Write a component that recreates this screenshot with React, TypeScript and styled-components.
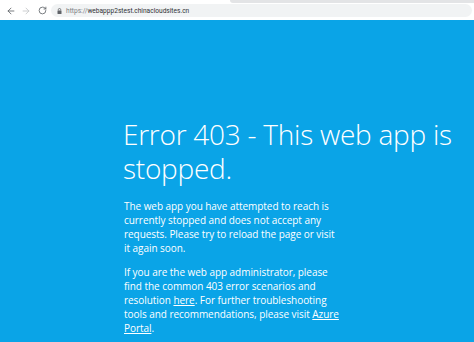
import React from "react";
import styled, { createGlobalStyle } from "styled-components";
import { ArrowLeft, ArrowRight, RotateCw } from "lucide-react";

const Global = createGlobalStyle`
  html, body { margin: 0; padding: 0; }
  body {
    background: #0aa4e7;
    width: 474px;
    height: 342px;
    overflow: hidden;
  }
`;

const Page = styled.div`
  display: flex;
  flex-direction: column;
  width: 474px;
  height: 342px;
  background: #0aa4e7;
`;

const Chrome = styled.header`
  height: 20px;
  background: #ffffff;
  display: flex;
  flex-direction: column;
`;

const TabStrip = styled.div`
  height: 3px;
  display: flex;
`;

const TabSpacer = styled.div`
  width: 230px;
  background: #ffffff;
`;

const TabEdge = styled.div`
  flex: 1;
  background: #e3e4e6;
  border-bottom-left-radius: 3px;
`;

const Toolbar = styled.div`
  flex: 1;
  display: flex;
  align-items: center;
  padding: 1px 2px 3px 4px;
`;

const NavButton = styled.span<{ $dim?: boolean; $w: number }>`
  width: ${(p) => p.$w}px;
  display: flex;
  align-items: center;
  justify-content: center;
  color: ${(p) => (p.$dim ? "#c3c5c8" : "#5f6368")};
`;

const Omnibox = styled.div`
  flex: 1;
  height: 13px;
  margin-left: 1px;
  border-radius: 7px;
  background: #f1f3f4;
  display: flex;
  align-items: center;
  padding-left: 6px;
  gap: 4px;
`;

const Url = styled.span`
  font-family: Roboto, "Liberation Sans", sans-serif;
  font-size: 6.6px;
  color: #303134;
  white-space: nowrap;
`;

const Scheme = styled.span`
  color: #7b7f84;
`;

const Content = styled.main`
  flex: 1;
  padding: 97px 0 0 123px;
  color: #ffffff;
`;

const Title = styled.h1`
  margin: 0;
  font-family: "Open Sans", "Segoe UI", sans-serif;
  font-weight: 300;
  font-size: 28px;
  line-height: 34px;
  letter-spacing: -0.25px;
  white-space: nowrap;
`;

const Para = styled.p`
  margin: 14px 0 0 1px;
  font-family: "Open Sans", "Segoe UI", sans-serif;
  font-size: 10px;
  line-height: 14px;
  letter-spacing: -0.05px;
  white-space: nowrap;
  & + & {
    margin-top: 10px;
  }
`;

const Link = styled.a`
  color: #ffffff;
  text-decoration: underline;
`;

const LockIcon = () => (
  <svg width="5" height="6" viewBox="0 0 10 12">
    <path d="M2.5 5V3.5a2.5 2.5 0 0 1 5 0V5" fill="none" stroke="#5f6368" strokeWidth="1.6" />
    <rect x="1" y="5" width="8" height="7" rx="1" fill="#5f6368" />
  </svg>
);

export default function App() {
  return (
    <Page>
      <Global />
      <Chrome>
        <TabStrip>
          <TabSpacer />
          <TabEdge />
        </TabStrip>
        <Toolbar>
          <NavButton $w={14}>
            <ArrowLeft size={10} strokeWidth={2} />
          </NavButton>
          <NavButton $w={16} $dim>
            <ArrowRight size={10} strokeWidth={2} />
          </NavButton>
          <NavButton $w={16}>
            <RotateCw size={9} strokeWidth={2.2} />
          </NavButton>
          <Omnibox>
            <LockIcon />
            <Url>
              <Scheme>https://</Scheme>webappp2stest.chinacloudsites.cn
            </Url>
          </Omnibox>
        </Toolbar>
      </Chrome>
      <Content>
        <Title>
          Error 403 - This web app is
          <br />
          stopped.
        </Title>
        <Para>
          The web app you have attempted to reach is
          <br />
          currently stopped and does not accept any
          <br />
          requests. Please try to reload the page or visit
          <br />
          it again soon.
        </Para>
        <Para>
          If you are the web app administrator, please
          <br />
          find the common 403 error scenarios and
          <br />
          resolution <Link href="#">here</Link>. For further troubleshooting
          <br />
          tools and recommendations, please visit <Link href="#">Azure</Link>
          <br />
          <Link href="#">Portal</Link>.
        </Para>
      </Content>
    </Page>
  );
}
